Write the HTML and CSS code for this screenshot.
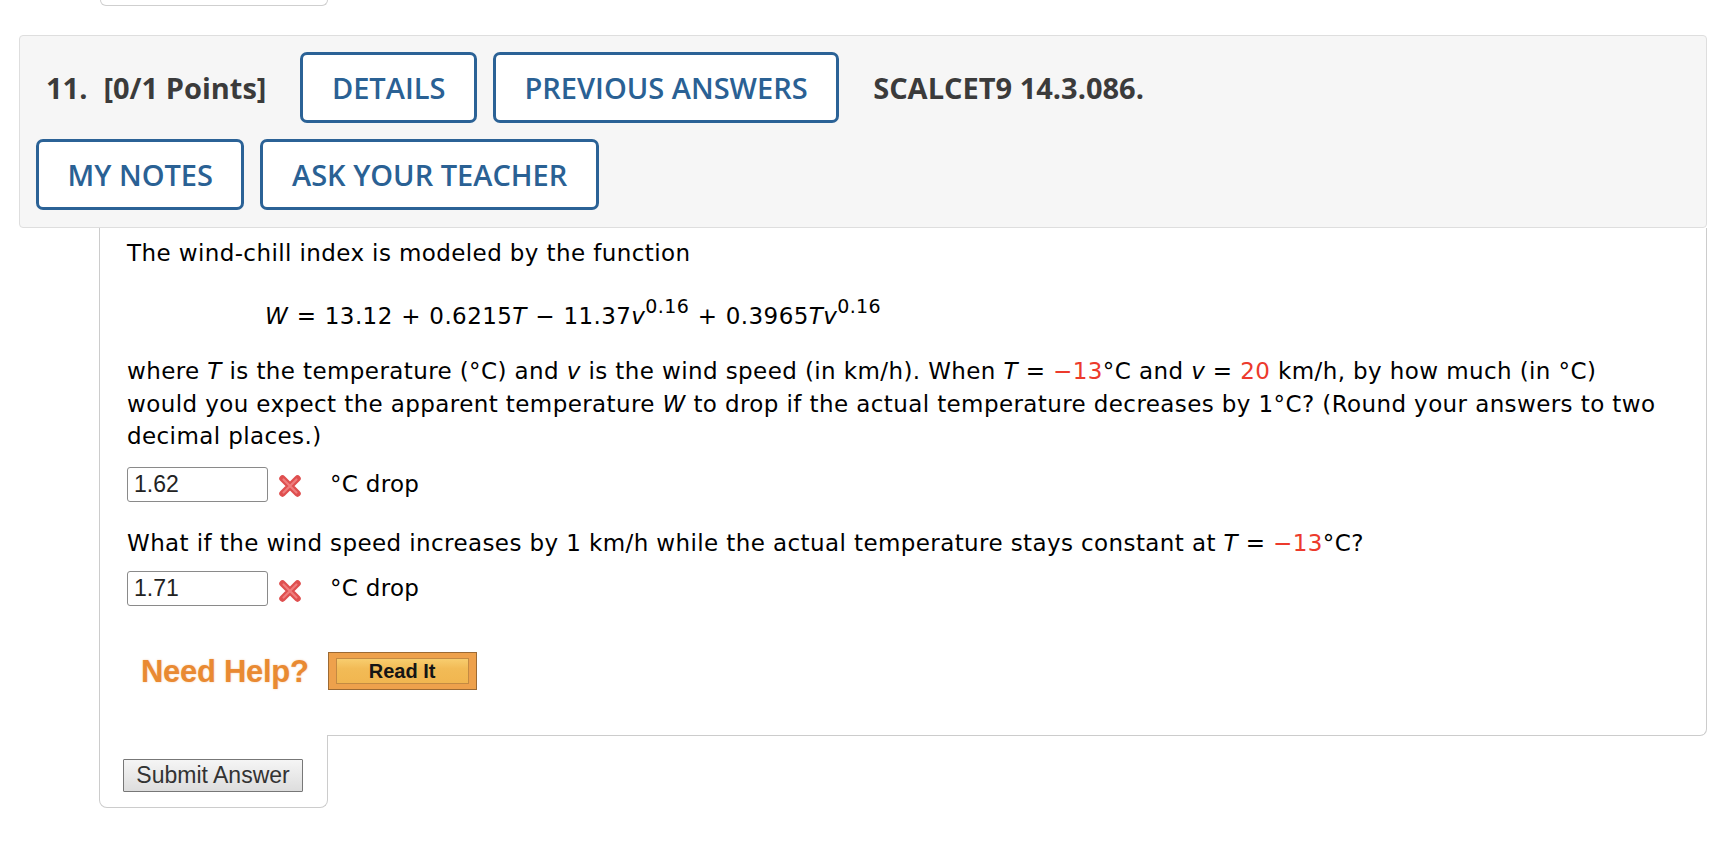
FILE: index.html
```html
<!DOCTYPE html>
<html lang="en">
<head>
<meta charset="utf-8">
<title>Question 11</title>
<link rel="stylesheet" href="styles.css">
</head>
<body>
<div class="prev-tab"></div>
<div class="question">
  <div class="q-header">
    <div class="q-row">
      <span class="q-title"><span class="q-num">11.</span><span class="q-points">[0/1 Points]</span></span>
      <button class="q-btn">DETAILS</button>
      <button class="q-btn">PREVIOUS ANSWERS</button>
      <span class="q-code">SCALCET9 14.3.086.</span>
    </div>
    <div class="q-row">
      <button class="q-btn">MY NOTES</button>
      <button class="q-btn">ASK YOUR TEACHER</button>
    </div>
  </div>
  <div class="q-body">
    <p class="intro">The wind-chill index is modeled by the function</p>
    <p class="formula"><i>W</i><span class="op">=</span>13.12<span class="op">+</span>0.6215<i>T</i><span class="op">−</span>11.37<i>v</i><sup>0.16</sup><span class="op">+</span>0.3965<i>Tv</i><sup>0.16</sup></p>
    <p class="para">where <i>T</i> is the temperature (°C) and <i>v</i> is the wind speed (in km/h). When <i>T</i> = <span class="red">−13</span>°C and <i>v</i> = <span class="red">20</span> km/h, by how much (in °C) would you expect the apparent temperature <i>W</i> to drop if the actual temperature decreases by 1°C? (Round your answers to two decimal places.)</p>
    <div class="answer-row first">
      <input class="answer" type="text" value="1.62" readonly>
      <svg class="x-icon" width="24" height="24" viewBox="0 0 24 24" aria-hidden="true">
        <path d="M4.5 4.5 L19.5 19.5 M19.5 4.5 L4.5 19.5" stroke="#df4f4f" stroke-width="6.5" stroke-linecap="round"/>
        <path d="M5.5 5.5 L18.5 18.5 M18.5 5.5 L5.5 18.5" stroke="#ef7d7d" stroke-width="2.2" stroke-linecap="round"/>
      </svg>
      <span class="unit">°C drop</span>
    </div>
    <p class="para second">What if the wind speed increases by 1 km/h while the actual temperature stays constant at <i>T</i> = <span class="red">−13</span>°C?</p>
    <div class="answer-row">
      <input class="answer" type="text" value="1.71" readonly>
      <svg class="x-icon" width="24" height="24" viewBox="0 0 24 24" aria-hidden="true">
        <path d="M4.5 4.5 L19.5 19.5 M19.5 4.5 L4.5 19.5" stroke="#df4f4f" stroke-width="6.5" stroke-linecap="round"/>
        <path d="M5.5 5.5 L18.5 18.5 M18.5 5.5 L5.5 18.5" stroke="#ef7d7d" stroke-width="2.2" stroke-linecap="round"/>
      </svg>
      <span class="unit">°C drop</span>
    </div>
    <div class="help-row">
      <span class="need-help">Need Help?</span>
      <span class="read-it"><span class="read-it-inner">Read It</span></span>
    </div>
  </div>
  <div class="submit-tab"><button class="submit">Submit Answer</button></div>
</div>
</body>
</html>
```
FILE: styles.css
```css
* { box-sizing: border-box; }

body {
  margin: 0;
  background: #ffffff;
  font-family: "DejaVu Sans", Verdana, sans-serif;
  color: #000000;
}

.prev-tab {
  margin-left: 100px;
  width: 228px;
  height: 6px;
  border: 1px solid #cfcfcf;
  border-top: none;
  border-radius: 0 0 7px 7px;
}

.question {
  margin-top: 29px;
}

.q-header {
  margin-left: 19px;
  width: 1688px;
  background: #f6f6f6;
  border: 1px solid #dedede;
  border-radius: 4px;
  padding: 16px 16px 17px 16px;
  display: flex;
  flex-direction: column;
  gap: 16px;
}

.q-row {
  display: flex;
  align-items: center;
  gap: 16px;
}

.q-title {
  display: flex;
  margin-left: 10px;
  margin-right: 18px;
  font-family: "Open Sans", sans-serif;
  font-weight: 700;
  font-size: 29px;
  color: #3b3b3b;
}

.q-num { margin-right: 16px; }

.q-btn {
  height: 71px;
  padding: 0 28.5px;
  border: 3px solid #2b6296;
  border-radius: 7px;
  background: #ffffff;
  color: #2a6194;
  font-family: "Open Sans", sans-serif;
  font-weight: 600;
  font-size: 29px;
  line-height: 1;
}

.q-code {
  margin-left: 18px;
  font-family: "Open Sans", sans-serif;
  font-weight: 700;
  font-size: 29px;
  color: #3b3b3b;
}

.q-body {
  margin-left: 99px;
  width: 1608px;
  border: 1px solid #cccccc;
  border-top: none;
  border-radius: 0 0 7px 0;
  padding: 9px 36px 45px 27px;
  font-size: 23px;
  line-height: 32.5px;
}

.q-body p {
  margin: 0;
  letter-spacing: 0.4px;
}

.formula {
  margin-top: 30px !important;
  padding-left: 138px;
}

.formula .op {
  margin: 0 8.5px;
}

.formula sup {
  font-size: 19px;
  line-height: 0;
  vertical-align: 11px;
}

.para { margin-top: 23px !important; }

.para.second { margin-top: 25px !important; }

.red { color: #ec3a2c; }

.answer-row {
  display: flex;
  align-items: center;
  margin-top: 12px;
}

.answer-row.first { margin-top: 14px; }

.answer {
  width: 141px;
  height: 35px;
  margin: 0;
  padding: 0 6px;
  border: 1px solid #8a8a8a;
  border-radius: 3px;
  background: #ffffff;
  font-family: "Liberation Sans", Arial, sans-serif;
  font-size: 23px;
  color: #222222;
}

.x-icon {
  margin-left: 10px;
  margin-top: 4px;
}

.unit {
  margin-left: 28px;
  letter-spacing: 0.3px;
}

.help-row {
  display: flex;
  align-items: center;
  margin-top: 46px;
}

.need-help {
  margin-left: 14px;
  font-family: "Liberation Sans", Arial, sans-serif;
  font-weight: 700;
  font-size: 31px;
  line-height: 37px;
  letter-spacing: -0.3px;
  color: #e98a32;
  text-shadow: 0 0 2px rgba(233, 138, 50, 0.45);
}

.read-it {
  margin-left: 19px;
  width: 149px;
  height: 38px;
  padding: 5px 7px;
  border: 1px solid #9c6a34;
  background: #eea14c;
  display: flex;
}

.read-it-inner {
  flex: 1;
  display: flex;
  align-items: center;
  justify-content: center;
  border: 1px solid #c48a42;
  background: linear-gradient(#f8cd6e, #f2bb56 40%, #f1b650);
  font-family: "Liberation Sans", Arial, sans-serif;
  font-weight: 700;
  font-size: 20px;
  color: #151515;
}

.submit-tab {
  position: relative;
  margin-top: -1px;
  margin-left: 99px;
  width: 229px;
  height: 73px;
  background: #ffffff;
  border: 1px solid #cccccc;
  border-top: none;
  border-radius: 0 0 8px 8px;
  padding: 24px 0 0 23px;
}

.submit {
  width: 180px;
  height: 33px;
  margin: 0;
  padding: 0;
  border: 1px solid #777777;
  border-radius: 1px;
  background: linear-gradient(#f5f5f5, #dddddd);
  font-family: "Liberation Sans", Arial, sans-serif;
  font-size: 23px;
  color: #333333;
}
```
